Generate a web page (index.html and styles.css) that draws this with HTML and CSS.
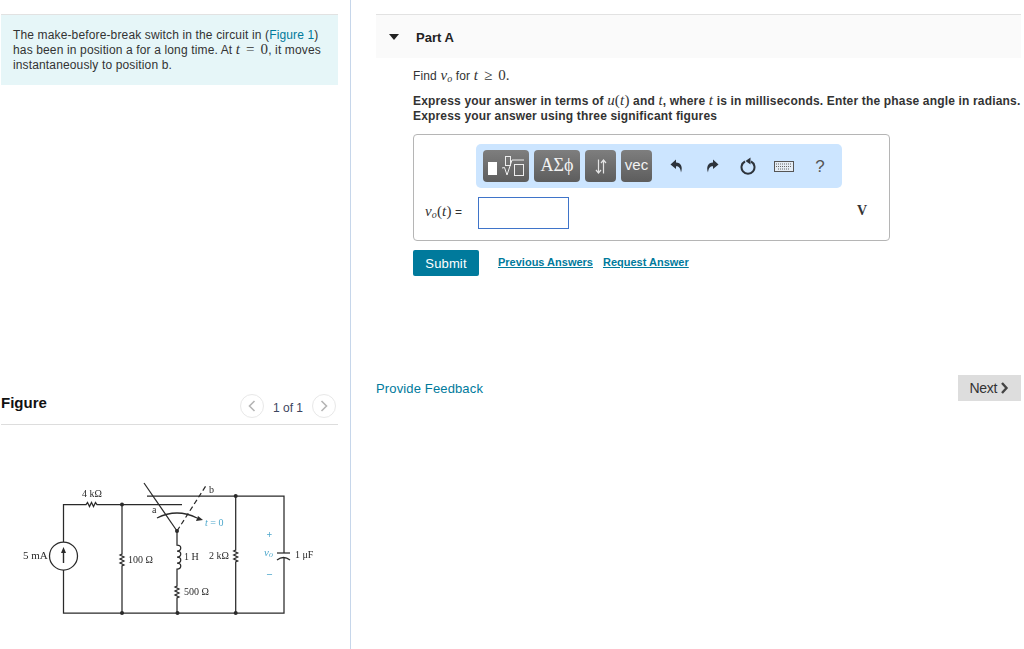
FILE: index.html
```html
<!DOCTYPE html>
<html lang="en">
<head>
    <meta charset="UTF-8">
    <title>Part A</title>
    <link rel="stylesheet" href="styles.css">
</head>
<body>
    <div class="left">
        <div class="intro">
            The make-before-break switch in the circuit in (<a href="#">Figure 1</a>)
            has been in position a for a long time. At <span class="math"><i>t</i> = 0</span>, it moves
            instantaneously to position b.
        </div>

        <div class="figure-head">
            <h3>Figure</h3>
            <div class="pager">
                <span class="round-btn">
                    <svg width="8" height="12" viewBox="0 0 8 12"><path d="M6.5 1 1.5 6l5 5" fill="none" stroke="#b5b5b5" stroke-width="1.6"/></svg>
                </span>
                <span class="pager-text">1 of 1</span>
                <span class="round-btn">
                    <svg width="8" height="12" viewBox="0 0 8 12"><path d="M1.5 1l5 5-5 5" fill="none" stroke="#b5b5b5" stroke-width="1.6"/></svg>
                </span>
            </div>
        </div>

        <svg class="circuit" width="338" height="150" viewBox="0 470 338 150">
            <g fill="none" stroke="#2a2a2a" stroke-width="1.250">
                <path d="M63.5 541V503.5H86l1.500-2 2 4 2-4 2 4 2-4 1.500 2H182"/>
                <path d="M63.500 569V612H284V557"/>
                <path d="M147 495H284V552"/>
                <path d="M122 503.500V553l-2 1 4 2-4 2 4 2-4 2 4 2-2 1V612"/>
                <path d="M235.700 495V549l-2 1 4 2-4 2 4 2-4 2 4 2-2 1V612"/>
                <path d="M177 530V544c5 0 5 6 0 6c5 0 5 6 0 6c5 0 5 6 0 6c5 0 5 6 0 6V585l-2 1 4 2-4 2 4 2-4 2 4 2-2 1V612"/>
                <circle cx="63.500" cy="555" r="14"/>
                <path d="M63.500 562V550" stroke-width="1.400"/>
                <path d="M144 482 177 530"/>
                <path d="M177 530 207 483" stroke-dasharray="5 3"/>
                <path d="M157 517Q177 507 197 517"/>
                <path d="M277 552H290"/>
                <path d="M277 559Q283.500 554 290 559"/>
            </g>
            <g fill="#2a2a2a" stroke="none">
                <path d="M63.500 546l-2.500 6h5z"/>
                <path d="M203 519l-7 1 2-5z"/>
                <circle cx="122" cy="503.500" r="2"/>
                <circle cx="235.700" cy="495" r="2"/>
                <circle cx="177" cy="530" r="2"/>
                <circle cx="122" cy="612" r="2"/>
                <circle cx="177.500" cy="612" r="2"/>
                <circle cx="235.700" cy="612" r="2"/>
            </g>
            <g class="circuit-label">
                <text x="82" y="496">4 kΩ</text>
                <text x="152" y="512">a</text>
                <text x="209" y="492">b</text>
                <text x="23" y="558" font-size="11">5 mA</text>
                <text x="128" y="562">100 Ω</text>
                <text x="184" y="559">1 H</text>
                <text x="209" y="558">2 kΩ</text>
                <text x="184" y="594">500 Ω</text>
                <text x="295" y="557">1 μF</text>
            </g>
            <g class="circuit-label blue">
                <text x="205" y="525"><tspan font-style="italic">t</tspan> = 0</text>
                <text x="264" y="555" font-style="italic" font-size="11">v<tspan font-size="8" dy="1">o</tspan></text>
                <text x="266.500" y="537" font-weight="bold">+</text>
                <text x="267" y="576" font-weight="bold">–</text>
            </g>
        </svg>
    </div>

    <div class="right">
        <div class="part-head">
            <span class="caret"></span>
            <span class="part-title">Part A</span>
        </div>

        <div class="part-body">
            <p class="find">Find <span class="math"><i>v<sub>o</sub></i></span> for <span class="math"><i>t</i> ≥ 0.</span></p>
            <p class="instructions">
                Express your answer in terms of <span class="math"><i>u</i>(<i>t</i>)</span> and <span class="math"><i>t</i></span>, where <span class="math"><i>t</i></span> is in milliseconds. Enter the phase angle in radians.<br>
                Express your answer using three significant figures
            </p>

            <div class="answer-box">
                <div class="toolbar">
                    <span class="tool tool-wide">
                        <span class="solid-box"></span>
                        <svg width="23" height="21" viewBox="0 0 23 21" fill="none" stroke="#eee" stroke-width="1">
                            <rect x="3.500" y="0.500" width="5" height="9"/>
                            <path d="M0 12l2.500-.5L5 19l5-15h12"/>
                            <rect x="12.500" y="8.500" width="9" height="11"/>
                        </svg>
                    </span>
                    <span class="tool tool-wide tool-serif">ΑΣϕ</span>
                    <span class="tool">
                        <svg width="12" height="15" viewBox="0 0 12 15" fill="none" stroke="#e4e4e4" stroke-width="1.200">
                            <path d="M3.500 .5v13M1 11l2.500 3L6 11"/>
                            <path d="M8.500 14.500V1.500M6 4l2.500-3L11 4"/>
                        </svg>
                    </span>
                    <span class="tool tool-vec">vec</span>
                    <div class="tool-icons">
                        <span class="icon-cell"><svg width="13" height="14" viewBox="0 0 13 14"><path d="M6 .5 .5 5.500 6 10V7.200c3 0 4.500 1.800 5 6.300 2-5.500 0-10-5-10z" fill="#2d333b"/></svg></span>
                        <span class="icon-cell"><svg width="13" height="14" viewBox="0 0 13 14"><path d="M7 .5l5.500 5L7 10V7.200c-3 0-4.500 1.800-5 6.300-2-5.500 0-10 5-10z" fill="#2d333b"/></svg></span>
                        <span class="icon-cell"><svg width="16" height="18" viewBox="0 0 16 18" fill="none"><path d="M5 4.500a6.500 6.500 0 1 0 6 0" stroke="#2d333b" stroke-width="2"/><path d="M10.500 .5v7L5.500 4z" fill="#2d333b"/></svg></span>
                        <span class="icon-cell"><svg width="20" height="11" viewBox="0 0 20 11"><rect x=".5" y=".5" width="19" height="10" fill="#e4ecf4" stroke="#555"/><path d="M2 3h16M2 5.500h16M4 8h12" stroke="#666" stroke-dasharray="1 1"/></svg></span>
                        <span class="icon-cell help">?</span>
                    </div>
                </div>

                <div class="answer-row">
                    <span class="answer-label"><span class="math"><i>v<sub>o</sub></i>(<i>t</i>)</span> =</span>
                    <input class="answer-input" type="text">
                    <span class="unit">V</span>
                </div>
            </div>

            <div class="actions">
                <button class="submit">Submit</button>
                <a class="action-link" href="#">Previous Answers</a>
                <a class="action-link" href="#">Request Answer</a>
            </div>
        </div>

        <div class="footer-row">
            <a class="feedback" href="#">Provide Feedback</a>
            <span class="next">Next <b class="chev">
                <svg width="9" height="12" viewBox="0 0 9 12"><path d="M2 1l4.500 5L2 11" fill="none" stroke="#444" stroke-width="2.400"/></svg>
            </b></span>
        </div>
    </div>
</body>
</html>
```

FILE: styles.css
```css
* {
    box-sizing: border-box;
}

body {
    margin: 0;
    height: 649px;
    display: flex;
    overflow: hidden;
    background: #fff;
    color: #333;
    font-family: "Liberation Sans", Arial, sans-serif;
    font-size: 12px;
    line-height: 15px;
    letter-spacing: 0.14px;
}

a {
    color: #007a9c;
    text-decoration: none;
}

.math {
    display: inline-block;
    height: 12px;
    font-family: "Liberation Serif", serif;
    font-size: 15px;
    line-height: 12px;
    word-spacing: 2px;
}

sub {
    font-size: 10px;
    line-height: 0;
    vertical-align: -2px;
}

/* Left column */
.left {
    width: 350px;
    padding: 14px 12px 0 1px;
    flex-shrink: 0;
}

.intro {
    height: 71px;
    padding: 13px 12px 0 12px;
    background: #e6f6f8;
    border-top: 1px solid #e2e2e2;
}

.figure-head {
    display: flex;
    justify-content: space-between;
    align-items: center;
    height: 40px;
    margin-top: 300px;
    padding: 0 2px 0 0;
    border-bottom: 1px solid #ddd;
}

.figure-head h3 {
    margin: 0 0 4px;
    color: #111;
    font-size: 15px;
    letter-spacing: 0;
}

.pager {
    display: flex;
    align-items: center;
    gap: 9px;
    padding-top: 2px;
    letter-spacing: 0;
}

.pager-text {
    margin-top: 5px;
    color: #3c4560;
}

.round-btn {
    display: flex;
    align-items: center;
    justify-content: center;
    width: 24px;
    height: 24px;
    border: 1px solid #e8e8e8;
    border-radius: 50%;
}

.circuit {
    display: block;
    margin: 46px 0 0 -1px;
    filter: blur(0.35px);
}

.circuit-label {
    fill: #2a2a2a;
    font-family: "Liberation Serif", serif;
    font-size: 10px;
    letter-spacing: 0;
}

.circuit-label.blue {
    fill: #4fa8cc;
}

/* Right column */
.right {
    flex: 1;
    padding: 14px 3px 0 25px;
    border-left: 1px solid #c6d6ea;
}

.part-head {
    display: flex;
    align-items: center;
    height: 44px;
    padding-top: 1px;
    background: #fafafa;
    border-top: 1px solid #e2e2e2;
}

.caret {
    width: 0;
    height: 0;
    margin-left: 13px;
    border-top: 6px solid #222;
    border-left: 5px solid transparent;
    border-right: 5px solid transparent;
}

.part-title {
    margin-left: 17px;
    color: #222;
    font-size: 13px;
    font-weight: bold;
    letter-spacing: 0;
}

.part-body {
    padding-left: 37px;
}

.find {
    margin: 11px 0 0;
}

.instructions {
    margin: 10px -3px 0 0;
    font-weight: bold;
    letter-spacing: 0.17px;
    white-space: nowrap;
}

.instructions .math {
    font-weight: normal;
}

.answer-box {
    position: relative;
    width: 477px;
    height: 107px;
    margin-top: 10px;
    padding-top: 9px;
    border: 1px solid #b5b5b5;
    border-radius: 4px;
}

.toolbar {
    display: flex;
    align-items: center;
    gap: 5px;
    width: 366px;
    height: 44px;
    margin-left: 62px;
    padding: 0 7px;
    background: #cce5ff;
    border-radius: 5px;
    letter-spacing: 0;
}

.tool {
    display: flex;
    align-items: center;
    justify-content: center;
    flex-shrink: 0;
    width: 31px;
    height: 32px;
    background: linear-gradient(#7e7e7e, #5d5d5d);
    border-radius: 4px;
    color: #f2f2f2;
    font-size: 13px;
}

.tool-wide {
    width: 46px;
    gap: 5px;
}

.tool-serif {
    padding-bottom: 1px;
    font-family: "Liberation Serif", serif;
    font-size: 18px;
}

.tool-vec {
    padding-bottom: 4px;
    font-size: 15px;
}

.solid-box {
    width: 9px;
    height: 13px;
    margin-top: 5px;
    background: #fff;
}

.tool-icons {
    display: flex;
    align-items: center;
    flex: 1;
    min-width: 0;
    padding-left: 1px;
}

.icon-cell {
    display: flex;
    align-items: center;
    justify-content: center;
    flex-shrink: 0;
    width: 36px;
}

.help {
    color: #555;
    font-size: 17px;
}

.answer-row {
    display: flex;
    align-items: center;
    margin-top: 9px;
    padding-left: 11px;
}

.answer-label {
    width: 53px;
    margin-top: -2px;
    white-space: nowrap;
}

.answer-input {
    width: 91px;
    height: 32px;
    border: 1px solid #3f74c9;
    outline: none;
}

.unit {
    margin-left: 288px;
    margin-top: -5px;
    color: #333;
    font-family: "Liberation Serif", serif;
    font-size: 14px;
    font-weight: bold;
}

.actions {
    display: flex;
    align-items: center;
    margin-top: 9px;
}

.submit {
    width: 66px;
    height: 26px;
    margin-right: 19px;
    padding: 0;
    border: none;
    border-radius: 2px;
    background: #007a9c;
    color: #fff;
    font-family: inherit;
    font-size: 13px;
    letter-spacing: 0.14px;
}

.action-link {
    margin-right: 10px;
    margin-top: -1px;
    font-size: 11px;
    font-weight: bold;
    letter-spacing: 0;
    text-decoration: underline;
}

.footer-row {
    display: flex;
    justify-content: space-between;
    margin-top: 99px;
}

.feedback {
    font-size: 13px;
    margin-top: 6px;
}

.next {
    display: flex;
    align-items: center;
    gap: 3px;
    height: 26px;
    padding: 0 12px 0 11px;
    background: #ddd;
    color: #333;
    font-size: 14px;
    letter-spacing: -0.3px;
}

.chev {
    display: flex;
}
```
